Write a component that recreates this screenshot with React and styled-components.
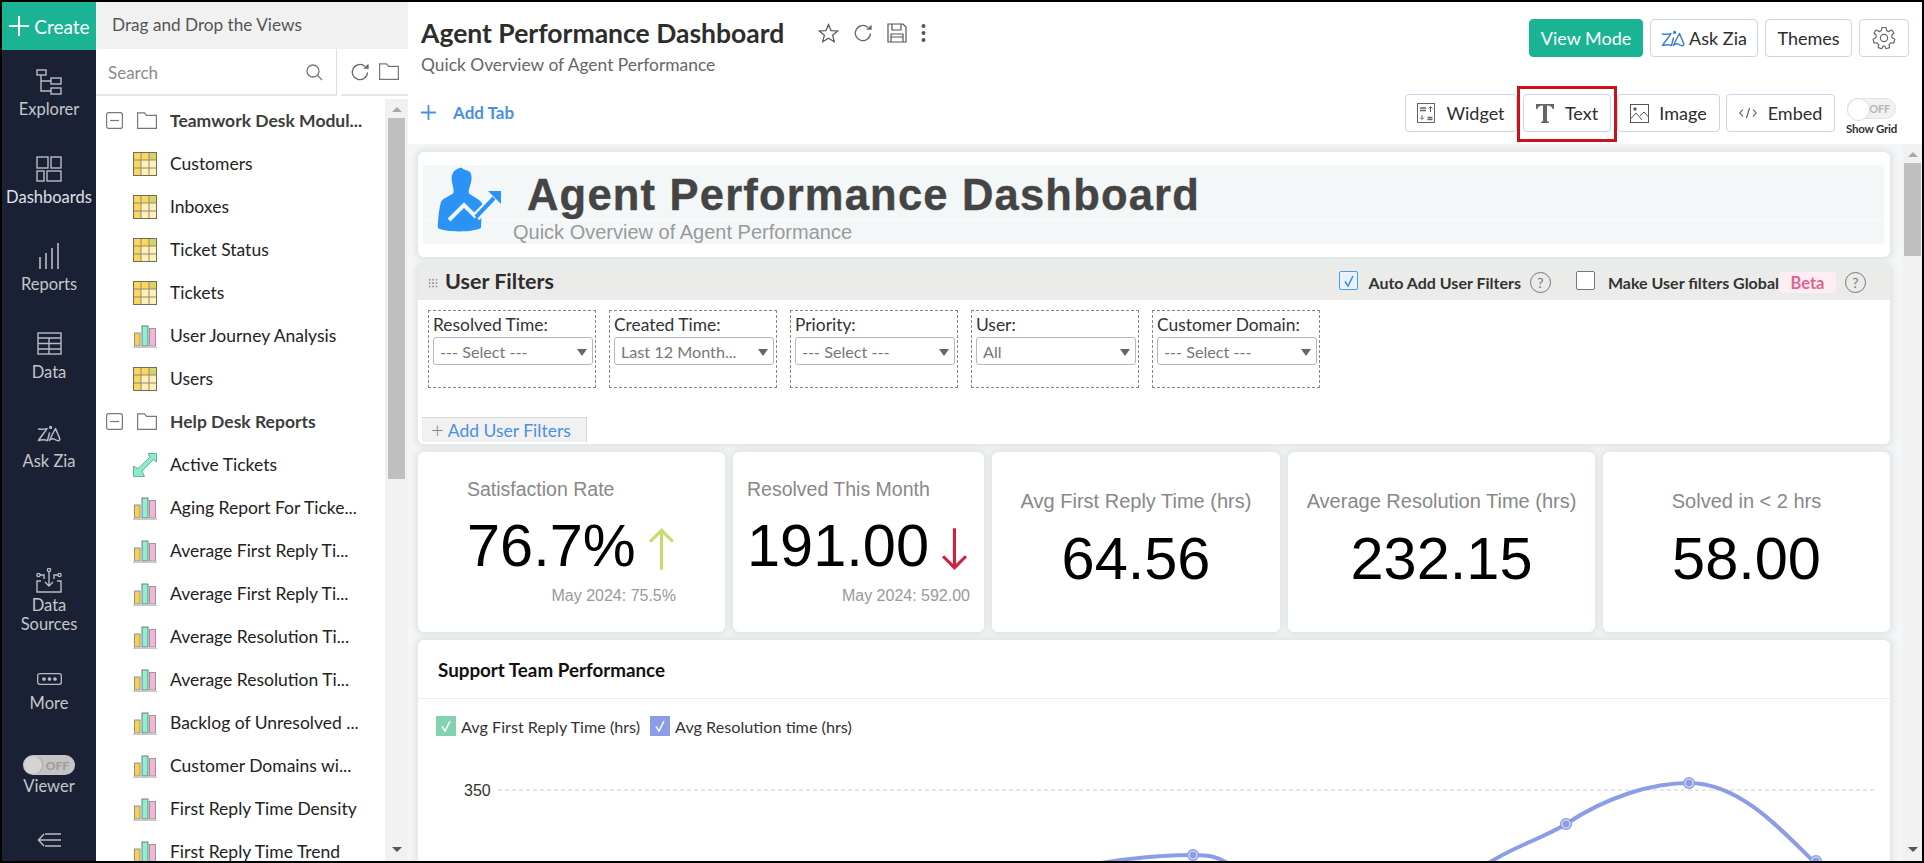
import React from "react";
import styled, { createGlobalStyle } from "styled-components";

const GlobalStyle = createGlobalStyle`
  html, body { margin: 0; padding: 0; height: 100%; overflow: hidden; background: #fff; }
  #root { height: 100%; }
  * { box-sizing: border-box; }
  body { font-family: "Lato", "Liberation Sans", sans-serif; }
`;

// ── Shell ────────────────────────────────────────────────────────────────────

const Frame = styled.div`
  display: flex;
  width: 1924px;
  height: 863px;
  border: 2px solid #000;
  overflow: hidden;
  background: #fff;
`;

// ── Left rail ────────────────────────────────────────────────────────────────

const Rail = styled.nav`
  width: 94px;
  flex-shrink: 0;
  display: flex;
  flex-direction: column;
  background: #1b2134;
`;

const CreateBtn = styled.div`
  height: 48px;
  background: #1ab394;
  color: #fff;
  display: flex;
  align-items: center;
  justify-content: center;
  gap: 4px;
  font-size: 19px;
`;

const RailItem = styled.div`
  height: ${({ $h }) => $h || 87.5}px;
  margin-top: ${({ $mt }) => $mt || 0}px;
  margin-bottom: ${({ $mb }) => $mb || 0}px;
  display: flex;
  flex-direction: column;
  align-items: center;
  justify-content: center;
  gap: ${({ $gap }) => $gap ?? 6}px;
  color: ${({ $active }) => ($active ? "#dfe0e4" : "#c4c6cc")};
  font-size: 16.5px;
  line-height: 19px;
  text-align: center;
  svg { display: block; }
`;

const RailBottom = styled.div`
  margin-top: auto;
`;

const RailToggle = styled.div`
  width: 52px;
  height: 20px;
  border-radius: 10px;
  background: #c4c4c4;
  display: flex;
  align-items: center;
  justify-content: flex-end;
  padding-right: 6px;
  position: relative;
  color: #9a9a9a;
  font-size: 12px;
  font-weight: 700;
  &::before {
    content: "";
    position: absolute;
    left: 1px;
    top: 1px;
    width: 18px;
    height: 18px;
    border-radius: 50%;
    background: #d4d4d4;
    box-shadow: 1px 0 1px #aaa;
  }
`;

// ── Views panel ──────────────────────────────────────────────────────────────

const Views = styled.aside`
  width: 312px;
  flex-shrink: 0;
  display: flex;
  flex-direction: column;
  background: #fff;
`;

const ViewsHead = styled.div`
  height: 47px;
  flex-shrink: 0;
  background: #f1f1f1;
  color: #555;
  font-size: 17.2px;
  display: flex;
  align-items: center;
  padding: 0 0 2px 16px;
`;

const SearchRow = styled.div`
  height: 47px;
  flex-shrink: 0;
  display: flex;
`;

const SearchBox = styled.div`
  width: 241px;
  border-right: 1px solid #dedede;
  border-bottom: 2px solid #e6e6e6;
  display: flex;
  align-items: center;
  justify-content: space-between;
  padding: 1px 13px 0 12px;
  color: #8b8b8b;
  font-size: 17px;
`;

const SearchTools = styled.div`
  margin-left: 4px;
  flex: 1;
  border-bottom: 2px solid #e6e6e6;
  display: flex;
  align-items: center;
  gap: 9px;
  padding-left: 9px;
`;

const TreeWrap = styled.div`
  flex: 1;
  min-height: 0;
  display: flex;
  padding-top: 3px;
  overflow: hidden;
`;

const Tree = styled.div`
  flex: 1;
  min-width: 0;
  overflow: hidden;
`;

const TreeRow = styled.div`
  height: 43px;
  display: flex;
  align-items: center;
  padding-left: ${({ $folder }) => ($folder ? 10 : 37)}px;
  gap: 13px;
  color: ${({ $folder }) => ($folder ? "#3d3d3d" : "#222")};
  font-size: 17.5px;
  font-weight: ${({ $folder }) => ($folder ? 700 : 400)};
  white-space: nowrap;
  svg { flex-shrink: 0; display: block; }
`;

const FolderIcons = styled.span`
  display: flex;
  align-items: center;
  gap: 14px;
`;

const VScroll = styled.div`
  width: ${({ $w }) => $w}px;
  flex-shrink: 0;
  background: #f1f1f1;
  display: flex;
  flex-direction: column;
  align-items: center;
  padding: 0 ${({ $pad }) => $pad || 0}px;
`;

const ScrollArrow = styled.div`
  flex-shrink: 0;
  width: 0;
  height: 0;
  border-left: 5px solid transparent;
  border-right: 5px solid transparent;
  ${({ $down }) =>
    $down
      ? "border-top: 5px solid #555; margin-top: auto; margin-bottom: 9px;"
      : "border-bottom: 5px solid #a8a8a8; margin-top: 8px; margin-bottom: 6px;"}
`;

const ScrollThumb = styled.div`
  width: 100%;
  height: ${({ $h }) => $h}px;
  background: #bfbfbf;
`;

// ── Main ─────────────────────────────────────────────────────────────────────

const Main = styled.main`
  flex: 1;
  min-width: 0;
  display: flex;
  flex-direction: column;
`;

const TopRow = styled.header`
  height: 76px;
  flex-shrink: 0;
  display: flex;
  justify-content: space-between;
  padding: 17px 13px 0 13px;
`;

const TitleLine = styled.div`
  display: flex;
  align-items: center;
  gap: 14px;
  height: 28px;
`;

const PageTitle = styled.h1`
  margin: 0 20px 0 0;
  font-size: 26.5px;
  font-weight: 700;
  color: #2d2d2d;
  white-space: nowrap;
`;

const PageSub = styled.div`
  margin-top: 7px;
  color: #666;
  font-size: 17.4px;
`;

const HeadBtns = styled.div`
  display: flex;
  gap: 7px;
  height: 38px;
`;

const Btn = styled.div`
  height: 38px;
  width: ${({ $w }) => $w}px;
  display: flex;
  align-items: center;
  justify-content: center;
  gap: ${({ $gap }) => $gap || 4}px;
  border-radius: 4px;
  border: 1px solid ${({ $primary }) => ($primary ? "#1ab394" : "#c9d5e8")};
  background: ${({ $primary }) => ($primary ? "#1ab394" : "#fff")};
  color: ${({ $primary }) => ($primary ? "#fff" : "#2d2d2d")};
  font-size: 18px;
  white-space: nowrap;
`;

const ToolRow = styled.div`
  height: 66px;
  flex-shrink: 0;
  display: flex;
  justify-content: space-between;
  align-items: flex-start;
  padding: 16px 25px 0 13px;
`;

const AddTab = styled.div`
  height: 36px;
  display: flex;
  align-items: center;
  gap: 17px;
  color: #4a90e2;
  font-size: 17px;
  font-weight: 700;
`;

const Tools = styled.div`
  display: flex;
  gap: 6px;
  align-items: flex-start;
`;

const Highlight = styled.div`
  position: relative;
  &::after {
    content: "";
    position: absolute;
    inset: -8px -6px -10px -6px;
    border: 3px solid #c8131b;
    pointer-events: none;
  }
`;

const GridSwitch = styled.div`
  width: 51px;
  margin-left: 5px;
  display: flex;
  flex-direction: column;
  align-items: center;
  gap: 3px;
  margin-top: 4px;
  color: #333;
  font-size: 11.5px;
  letter-spacing: -0.2px;
  font-weight: 700;
  white-space: nowrap;
`;

const GridToggle = styled.div`
  width: 49px;
  height: 21px;
  border-radius: 11px;
  background: #f1f1f1;
  border: 1px solid #e2e2e2;
  position: relative;
  display: flex;
  align-items: center;
  justify-content: flex-end;
  padding-right: 5px;
  color: #b5b5b5;
  font-size: 11px;
  &::before {
    content: "";
    position: absolute;
    left: -1px;
    top: -1px;
    width: 21px;
    height: 21px;
    border-radius: 50%;
    background: #fff;
    border: 1px solid #ddd;
  }
`;

// ── Canvas ───────────────────────────────────────────────────────────────────

const CanvasWrap = styled.div`
  flex: 1;
  min-height: 0;
  display: flex;
  background: #f3f5f6;
`;

const Canvas = styled.div`
  flex: 1;
  min-width: 0;
  overflow: hidden;
  padding: 8px 13px 0 10px;
  display: flex;
  flex-direction: column;
  gap: 8px;
`;

const Card = styled.section`
  background: #fff;
  border-radius: 6px;
  box-shadow: 0 0 5px 3px #e2e6e6;
  flex-shrink: 0;
`;

const BannerCard = styled(Card)`
  height: 105px;
  padding: 13px 6px 13px 5px;
`;

const Banner = styled.div`
  height: 79px;
  display: flex;
  background: linear-gradient(#f4f7f8 54px, #fafbfb 54px, #fafbfb 55px, #f4f7f8 55px);
`;

const BannerIcon = styled.div`
  width: 90px;
  flex-shrink: 0;
  padding: 2px 0 0 14px;
`;

const BannerText = styled.div`
  display: flex;
  flex-direction: column;
`;

const BannerTitle = styled.div`
  font-family: "Liberation Sans", Arial, sans-serif;
  font-weight: 700;
  font-size: 43.5px;
  line-height: 48px;
  letter-spacing: 1.2px;
  -webkit-text-stroke: 0.4px #444;
  color: #444;
  padding-left: 14px;
  white-space: nowrap;
  margin-top: 6px;
`;

const BannerSub = styled.div`
  font-family: "Liberation Sans", Arial, sans-serif;
  font-size: 20px;
  line-height: 24px;
  color: #9a9a9a;
  white-space: nowrap;
  margin-top: 1px;
`;

const FilterCard = styled(Card)`
  height: 179px;
  display: flex;
  flex-direction: column;
`;

const FilterHead = styled.div`
  height: 35px;
  flex-shrink: 0;
  background: #ebebe9;
  border-radius: 6px 6px 0 0;
  display: flex;
  align-items: center;
  padding: 0 24px 0 10px;
`;

const Grip = styled.span`
  width: 10px;
  height: 10px;
  margin-right: 7px;
  background-image: radial-gradient(#999 1px, transparent 1.1px);
  background-size: 3.4px 3.4px;
`;

const FilterTitle = styled.span`
  font-size: 21.5px;
  font-weight: 700;
  color: #2d2d2d;
  margin: -3px auto 0 0;
`;

const CheckLabel = styled.span`
  font-size: 16px;
  font-weight: 700;
  color: #333;
  white-space: nowrap;
`;

const CheckBox = styled.span`
  width: 19px;
  height: 19px;
  border-radius: 2px;
  margin-right: ${({ $mr }) => $mr || 10}px;
  margin-top: -4px;
  border: 1px solid ${({ $on }) => ($on ? "#4a9be8" : "#777")};
  background: ${({ $on }) => ($on ? "#e9f2fb" : "#fff")};
  display: flex;
  align-items: center;
  justify-content: center;
`;

const HelpDot = styled.span`
  width: 21px;
  height: 21px;
  border-radius: 50%;
  border: 1px solid #777;
  color: #777;
  font-size: 14px;
  display: flex;
  align-items: center;
  justify-content: center;
  margin: 0 ${({ $after }) => $after || 0}px 0 9px;
`;

const BetaPill = styled.span`
  height: 21px;
  width: 57px;
  border-radius: 4px;
  background: #fdeef3;
  color: #e0648f;
  font-size: 16.5px;
  font-weight: 700;
  display: flex;
  align-items: center;
  justify-content: center;
`;

const FilterRow = styled.div`
  display: flex;
  gap: 13px;
  padding: 10px 0 0 10px;
`;

const FilterBox = styled.div`
  width: 168px;
  height: 78px;
  border: 1px dashed #888;
  padding: 4px 3px 0 4px;
`;

const FilterLabel = styled.div`
  font-size: 17.4px;
  line-height: 20px;
  color: #333;
  white-space: nowrap;
`;

const SelectBox = styled.div`
  margin-top: 2px;
  height: 28px;
  width: 160px;
  border: 1px solid #b4b6c4;
  border-radius: 3px;
  display: flex;
  align-items: center;
  justify-content: space-between;
  padding: 0 5px 0 6px;
  color: #777;
  font-size: 16.2px;
  white-space: nowrap;
  &::after {
    content: "";
    border-left: 5px solid transparent;
    border-right: 5px solid transparent;
    border-top: 7px solid #666;
    margin-top: 2px;
  }
`;

const AddFilters = styled.div`
  margin: auto 0 2px 4px;
  width: 165px;
  height: 25px;
  background: #f1f1f1;
  border-top: 1px solid #d8d8d8;
  border-right: 1px solid #d8d8d8;
  color: #4a90e2;
  font-size: 17.5px;
  display: flex;
  align-items: center;
  gap: 4px;
  padding-left: 9px;
  white-space: nowrap;
  span { color: #888; font-size: 22px; line-height: 20px; font-weight: 300; }
`;

const KpiRow = styled.div`
  display: grid;
  grid-template-columns: 307px 251px 288px 307px 287px;
  gap: 8px;
  flex-shrink: 0;
`;

const Kpi = styled(Card)`
  height: 180px;
  display: flex;
  flex-direction: column;
  font-family: "Liberation Sans", Arial, sans-serif;
  align-items: ${({ $center }) => ($center ? "center" : "stretch")};
  padding: ${({ $center }) => ($center ? "37px 0 0" : "25px 0 0")};
  padding-left: ${({ $pad, $center }) => ($center ? 0 : $pad)}px;
  padding-right: ${({ $pad, $center }) => ($center ? 0 : $pad)}px;
`;

const KpiTitle = styled.div`
  color: #888;
  font-size: ${({ $size }) => $size || 20}px;
  line-height: 24px;
  white-space: nowrap;
`;

const KpiValue = styled.div`
  color: #000;
  font-size: 59.5px;
  line-height: 66px;
  margin-top: ${({ $center }) => ($center ? 13 : 12)}px;
  display: flex;
  align-items: center;
  gap: 12px;
  white-space: nowrap;
  svg { margin-top: 6px; }
`;

const KpiSub = styled.div`
  margin-top: 7px;
  text-align: right;
  color: #999;
  font-size: 16px;
  line-height: 20px;
  white-space: nowrap;
`;

const ChartCard = styled(Card)`
  flex: 1;
  min-height: 240px;
  border-radius: 6px 6px 0 0;
`;

const ChartHead = styled.div`
  height: 59px;
  border-bottom: 1px solid #eee;
  display: flex;
  align-items: center;
  padding-left: 20px;
  color: #111;
  font-size: 18.8px;
  font-weight: 700;
`;

const Legend = styled.div`
  display: flex;
  align-items: center;
  gap: 10px;
  padding: 17px 0 0 18px;
`;

const LegendItem = styled.span`
  display: flex;
  align-items: center;
  gap: 5px;
  color: #333;
  font-size: 16.2px;
  white-space: nowrap;
`;

const LegendBox = styled.span`
  width: 20px;
  height: 20px;
  background: ${({ $c }) => $c};
  display: flex;
  align-items: center;
  justify-content: center;
`;

const ChartSvg = styled.svg`
  display: block;
  position: absolute;
  left: 0;
  top: 0;
`;

const ChartBody = styled.div`
  position: relative;
`;

// ── Icons ────────────────────────────────────────────────────────────────────

const Line = ({ w, h, c = "#b9bcc4", sw = 1.4, children, fill = "none" }) => (
  <svg width={w} height={h} viewBox={`0 0 ${w} ${h}`} fill={fill} stroke={c} strokeWidth={sw}>
    {children}
  </svg>
);

const ZiaMark = ({ c = "#b9bcc4", w = 24, h = 19, sw = 1.5 }) => (
  <svg width={w} height={h} viewBox="0 0 24 19" fill="none" stroke={c} strokeWidth={sw} strokeLinejoin="round" strokeLinecap="round">
    <path d="M1.5 5 C4 5.6 7 5.4 10 4.6 C7.5 8.5 4 12.5 1.5 16.5 C4.5 15.4 7.5 15.4 10.5 16.5 L12.5 9" />
    <circle cx="13.6" cy="3.4" r="0.9" fill={c} />
    <path d="M12.5 16.5 C14.5 12 16.5 8 18.5 4.5 C20 8 21.5 11.5 22.8 15 C22.8 17.5 20 17 18 15.5 C16.5 14.5 15 14.6 13.8 15.4" />
  </svg>
);

const TableIcon = () => (
  <svg width="24" height="24" viewBox="0 0 24 24">
    <rect x="0.5" y="0.5" width="23" height="23" fill="#fff0b8" />
    <rect x="1" y="1" width="22" height="7" fill="#fbd75e" />
    <rect x="1" y="8" width="7" height="15" fill="#fbd75e" />
    <rect x="16" y="1" width="7" height="7" fill="#d6d464" />
    <path d="M8 0.5 V23.5 M16 0.5 V23.5 M0.5 8 H23.5 M0.5 16 H23.5" stroke="#8f8a78" strokeWidth="1" />
    <rect x="0.5" y="0.5" width="23" height="23" fill="none" stroke="#6f6c62" />
  </svg>
);

const ChartIcon = () => (
  <svg width="24" height="24" viewBox="0 0 24 24">
    <rect x="1.5" y="9" width="5.5" height="13" fill="#f8d24f" stroke="#8f8f8f" />
    <rect x="9" y="2" width="6" height="20" fill="#8ef0cf" stroke="#6f7f7a" />
    <rect x="16.5" y="4.5" width="6" height="17.5" fill="#f3b4d8" stroke="#999" />
    <path d="M0 23.3 H24" stroke="#c8c8c8" strokeWidth="1.5" />
  </svg>
);

const ArrowsIcon = () => (
  <svg width="24" height="24" viewBox="0 0 24 24">
    <path
      d="M15 0.5 H23.5 V9 L20.5 6.5 L9 18 L11.5 23.5 H0.5 V13 L5 15.5 L17 4Z"
      fill="#86eec8"
      stroke="#5a9a88"
      strokeWidth="0.8"
    />
  </svg>
);

const FolderIcon = ({ size = 20, c = "#777" }) => (
  <svg width={size} height={size * 0.85} viewBox="0 0 20 17" fill="#fff" stroke={c} strokeWidth="1.2">
    <path d="M0.6 16.4 V0.8 H7.5 L9.5 3.4 H19.4 V16.4Z" />
  </svg>
);

const MinusBox = () => (
  <svg width="17" height="17" viewBox="0 0 17 17" fill="none" stroke="#777" strokeWidth="1.2">
    <rect x="0.6" y="0.6" width="15.8" height="15.8" rx="2" />
    <path d="M4 8.5 H13" />
  </svg>
);

const RefreshIcon = ({ size = 20, c = "#666" }) => (
  <svg width={size} height={size} viewBox="0 0 20 20" fill="none" stroke={c} strokeWidth="1.3">
    <path d="M17.5 10.5 A7.6 7.6 0 1 1 15 4.4" />
    <path d="M13.2 6.8 L18.8 6.8 L18.4 1.8Z" fill={c} stroke="none" />
  </svg>
);

const UpArrow = ({ c, flip }) => (
  <svg width="27" height="42" viewBox="0 0 26 40" fill="none" stroke={c} strokeWidth="3" style={flip ? { transform: "rotate(180deg)" } : undefined}>
    <path d="M13 40 V2 M2 13 L13 2 L24 13" />
  </svg>
);

const Check = ({ c = "#fff", s = 14 }) => (
  <svg width={s} height={s} viewBox="0 0 14 14" fill="none" stroke={c} strokeWidth="1.5">
    <path d="M3 7.5 L6 12 L11 2" />
  </svg>
);

const AgentIcon = () => (
  <svg width="64" height="65" viewBox="0 0 64 65">
    <path
      d="M24 0.5 C20 2 17 3 16 6 C14 9 14.5 14 15.5 17 C16 21 17.5 24 16 26.5 C12 29.5 6 31 4 35 C2 42 1 52 0.8 61 C8 65.5 36 65.5 44 61 L45 36 C42 32 36 29.5 32 26.5 C31 24 32.5 21 33.5 17 C35 13 35 8 33 5 C30 3 27 3 24 0.5Z"
      fill="#2a93f5"
    />
    <path d="M39 50 L52 37" fill="none" stroke="#f4f7f8" strokeWidth="9" />
    <path d="M12 53 L27 38 L39 50" fill="none" stroke="#eef6fd" strokeWidth="4" />
    <path d="M39 50 L57 31" fill="none" stroke="#2a93f5" strokeWidth="4" />
    <path d="M51 24 H64 V37Z" fill="#2a93f5" />
  </svg>
);

// ── Data ─────────────────────────────────────────────────────────────────────

const teamwork = [
  ["Customers", TableIcon],
  ["Inboxes", TableIcon],
  ["Ticket Status", TableIcon],
  ["Tickets", TableIcon],
  ["User Journey Analysis", ChartIcon],
  ["Users", TableIcon],
];

const helpDesk = [
  ["Active Tickets", ArrowsIcon],
  ["Aging Report For Ticke...", ChartIcon],
  ["Average First Reply Ti...", ChartIcon],
  ["Average First Reply Ti...", ChartIcon],
  ["Average Resolution Ti...", ChartIcon],
  ["Average Resolution Ti...", ChartIcon],
  ["Backlog of Unresolved ...", ChartIcon],
  ["Customer Domains wi...", ChartIcon],
  ["First Reply Time Density", ChartIcon],
  ["First Reply Time Trend", ChartIcon],
];

const filters = [
  ["Resolved Time:", "--- Select ---"],
  ["Created Time:", "Last 12 Month..."],
  ["Priority:", "--- Select ---"],
  ["User:", "All"],
  ["Customer Domain:", "--- Select ---"],
];

const chartPoints = [
  [775, 119],
  [1148, 88],
  [1271, 47],
  [1398, 125],
];

const FolderRow = ({ name }) => (
  <TreeRow $folder>
    <FolderIcons>
      <MinusBox />
      <FolderIcon />
    </FolderIcons>
    {name}
  </TreeRow>
);

const App = () => (
  <>
    <GlobalStyle />
    <Frame>
      <Rail>
        <CreateBtn>
          <svg width="22" height="22" viewBox="0 0 22 22" stroke="#fff" strokeWidth="2">
            <path d="M11 1 V21 M1 11 H21" />
          </svg>
          Create
        </CreateBtn>
        <RailItem $gap={5}>
          <Line w={26} h={26}>
            <rect x="1" y="1" width="9" height="5" />
            <rect x="15" y="9" width="10" height="6" />
            <rect x="15" y="19" width="10" height="6" />
            <path d="M5 6 V22 H15 M5 12 H15" />
          </Line>
          Explorer
        </RailItem>
        <RailItem $active>
          <Line w={26} h={26}>
            <rect x="1" y="1" width="11" height="11" />
            <rect x="15" y="1" width="10" height="11" />
            <rect x="1" y="15" width="7" height="10" />
            <rect x="11" y="15" width="14" height="10" />
          </Line>
          Dashboards
        </RailItem>
        <RailItem>
          <Line w={22} h={26} sw={1.6}>
            <path d="M2 26 V14 M8 26 V10 M14 26 V5 M20 26 V0" />
          </Line>
          Reports
        </RailItem>
        <RailItem $gap={8} $mt={1}>
          <Line w={25} h={23}>
            <rect x="1" y="1" width="23" height="21" />
            <path d="M1 6 H24 M1 11.5 H24 M1 17 H24 M12 6 V22" />
          </Line>
          Data
        </RailItem>
        <RailItem $gap={9} $mt={3}>
          <ZiaMark />
          Ask Zia
        </RailItem>
        <RailBottom>
          <RailItem $gap={3} $mb={4}>
            <Line w={26} h={25}>
              <path d="M5 13 H1 V24 H25 V13 H21" />
              <path d="M13 3 V18 M9 14 L13 18 L17 14" />
              <circle cx="13" cy="2" r="1.6" />
              <circle cx="2.5" cy="7" r="1.6" />
              <circle cx="23.5" cy="7" r="1.6" />
              <path d="M4 7 H8 V11 M22 7 H18 V11" />
            </Line>
            <span>
              Data
              <br />
              Sources
            </span>
          </RailItem>
          <RailItem $gap={9}>
            <svg width="25" height="12" viewBox="0 0 25 12" fill="none" stroke="#b9bcc4" strokeWidth="1.3">
              <rect x="0.7" y="0.7" width="23.6" height="10.6" rx="2" />
              <circle cx="7" cy="6" r="1.2" fill="#b9bcc4" />
              <circle cx="12.5" cy="6" r="1.2" fill="#b9bcc4" />
              <circle cx="18" cy="6" r="1.2" fill="#b9bcc4" />
            </svg>
            More
          </RailItem>
          <RailItem $h={78} $gap={2} $mb={4.5}>
            <RailToggle>OFF</RailToggle>
            Viewer
          </RailItem>
          <RailItem $h={42}>
            <Line w={24} h={16} sw={1.5}>
              <path d="M7 2 L1.5 8 L7 14 M2 8 H24 M8 2 H24 M8 14 H24" />
            </Line>
          </RailItem>
        </RailBottom>
      </Rail>

      <Views>
        <ViewsHead>Drag and Drop the Views</ViewsHead>
        <SearchRow>
          <SearchBox>
            Search
            <svg width="17" height="17" viewBox="0 0 17 17" fill="none" stroke="#777" strokeWidth="1.3">
              <circle cx="7" cy="7" r="6" />
              <path d="M11.5 11.5 L16 16" />
            </svg>
          </SearchBox>
          <SearchTools>
            <RefreshIcon />
            <FolderIcon />
          </SearchTools>
        </SearchRow>
        <TreeWrap>
          <Tree>
            <FolderRow name="Teamwork Desk Modul..." />
            {teamwork.map(([name, Icon]) => (
              <TreeRow key={name}>
                <Icon />
                {name}
              </TreeRow>
            ))}
            <FolderRow name="Help Desk Reports" />
            {helpDesk.map(([name, Icon], i) => (
              <TreeRow key={i}>
                <Icon />
                {name}
              </TreeRow>
            ))}
          </Tree>
          <VScroll $w={23} $pad={3}>
            <ScrollArrow />
            <ScrollThumb $h={361} />
            <ScrollArrow $down />
          </VScroll>
        </TreeWrap>
      </Views>

      <Main>
        <TopRow>
          <div>
            <TitleLine>
              <PageTitle>Agent Performance Dashboard</PageTitle>
              <svg width="21" height="20" viewBox="0 0 21 20" fill="none" stroke="#555" strokeWidth="1.2">
                <path d="M10.5 1.5 L13 7.6 L19.8 8 L14.6 12.2 L16.3 18.7 L10.5 15.2 L4.7 18.7 L6.4 12.2 L1.2 8 L8 7.6Z" />
              </svg>
              <RefreshIcon />
              <svg width="20" height="20" viewBox="0 0 20 20" fill="none" stroke="#555" strokeWidth="1.2">
                <path d="M1 1 H16 L19 4 V19 H1Z" />
                <path d="M5 1 V7 H14 V1 M4 19 V11 H16 V19 M4 14 H16" />
              </svg>
              <svg width="5" height="20" viewBox="0 0 5 20" fill="#555">
                <circle cx="2.5" cy="3" r="2" />
                <circle cx="2.5" cy="10" r="2" />
                <circle cx="2.5" cy="17" r="2" />
              </svg>
            </TitleLine>
            <PageSub>Quick Overview of Agent Performance</PageSub>
          </div>
          <HeadBtns>
            <Btn $primary $w={114}>View Mode</Btn>
            <Btn $w={108}>
              <ZiaMark c="#3f7fd6" />
              Ask Zia
            </Btn>
            <Btn $w={87}>Themes</Btn>
            <Btn $w={50}>
              <svg width="24" height="26" viewBox="0 0 24 24" fill="none" stroke="#666" strokeWidth="1.2" strokeLinejoin="round">
                <circle cx="12" cy="12" r="3.6" />
                <path d="M10 1.5 H14 L14.6 4.6 L16.8 5.6 L19.6 3.9 L22 7 L19.7 9.2 L20 11.8 L22.8 13.2 L21.8 17 L18.8 16.8 L17 18.6 L17.6 21.6 L14 22.8 L12.8 20.2 H10.9 L9.6 22.8 L6.2 21.6 L6.8 18.6 L5 16.8 L2 17 L1.1 13.2 L3.9 11.8 L4.2 9.2 L2 7 L4.2 3.9 L7.1 5.6 L9.3 4.6Z" />
              </svg>
            </Btn>
          </HeadBtns>
        </TopRow>

        <ToolRow>
          <AddTab>
            <svg width="15" height="15" viewBox="0 0 15 15" stroke="#4a90e2" strokeWidth="1.8">
              <path d="M7.5 0 V15 M0 7.5 H15" />
            </svg>
            Add Tab
          </AddTab>
          <Tools>
            <Btn $w={112} $gap={11}>
              <svg width="18" height="20" viewBox="0 0 18 20" fill="none" stroke="#666" strokeWidth="1">
                <rect x="0.5" y="0.5" width="17" height="19" />
                <path d="M3 5 H9 M3 7.5 H9" strokeWidth="1.4" />
                <path d="M13.5 9 V4 M11.5 5.5 L13.5 3.5 L15.5 5.5 M5 12 V16 M3 14.5 L5 16.5 L7 14.5" />
                <path d="M10.5 14.5 H15.5 M10.5 16.5 H15.5" strokeWidth="1.6" />
              </svg>
              Widget
            </Btn>
            <Highlight>
              <Btn $w={88} $gap={11}>
                <svg width="18" height="19" viewBox="0 0 18 19" fill="#666">
                  <path d="M0 0 H18 V5 H16.6 Q16 1.5 11 1.5 V17 L13 18 V19 H5 V18 L7 17 V1.5 Q2 1.5 1.4 5 H0Z" />
                </svg>
                Text
              </Btn>
            </Highlight>
            <Btn $w={103} $gap={10}>
              <svg width="19" height="19" viewBox="0 0 19 19" fill="none" stroke="#555" strokeWidth="1">
                <rect x="0.5" y="0.5" width="18" height="18" />
                <circle cx="5" cy="5" r="1.2" fill="#555" />
                <path d="M0.5 15 L6 9 L12 16 M10 12 L14 8 L18.5 13" />
              </svg>
              Image
            </Btn>
            <Btn $w={109} $gap={11}>
              <svg width="18" height="12" viewBox="0 0 18 12" fill="none" stroke="#555" strokeWidth="1.1">
                <path d="M4 2.5 L0.8 6 L4 9.5 M14 2.5 L17.2 6 L14 9.5 M10.5 1 L7.5 11" />
              </svg>
              Embed
            </Btn>
            <GridSwitch>
              <GridToggle>OFF</GridToggle>
              Show Grid
            </GridSwitch>
          </Tools>
        </ToolRow>

        <CanvasWrap>
          <Canvas>
            <BannerCard>
              <Banner>
                <BannerIcon>
                  <AgentIcon />
                </BannerIcon>
                <BannerText>
                  <BannerTitle>Agent Performance Dashboard</BannerTitle>
                  <BannerSub>Quick Overview of Agent Performance</BannerSub>
                </BannerText>
              </Banner>
            </BannerCard>

            <FilterCard>
              <FilterHead>
                <Grip />
                <FilterTitle>User Filters</FilterTitle>
                <CheckBox $on>
                  <Check c="#3a8ee0" />
                </CheckBox>
                <CheckLabel>Auto Add User Filters</CheckLabel>
                <HelpDot $after={25}>?</HelpDot>
                <CheckBox $mr={13} />
                <CheckLabel>Make User filters Global</CheckLabel>
                <BetaPill>Beta</BetaPill>
                <HelpDot>?</HelpDot>
              </FilterHead>
              <FilterRow>
                {filters.map(([label, value]) => (
                  <FilterBox key={label}>
                    <FilterLabel>{label}</FilterLabel>
                    <SelectBox>{value}</SelectBox>
                  </FilterBox>
                ))}
              </FilterRow>
              <AddFilters>
                <span>+</span>Add User Filters
              </AddFilters>
            </FilterCard>

            <KpiRow>
              <Kpi $pad={49}>
                <KpiTitle $size={19.5}>Satisfaction Rate</KpiTitle>
                <KpiValue>
                  76.7%
                  <UpArrow c="#c9dc6a" />
                </KpiValue>
                <KpiSub>May 2024: 75.5%</KpiSub>
              </Kpi>
              <Kpi $pad={14}>
                <KpiTitle $size={19.5}>Resolved This Month</KpiTitle>
                <KpiValue>
                  191.00
                  <UpArrow c="#d0213f" flip />
                </KpiValue>
                <KpiSub>May 2024: 592.00</KpiSub>
              </Kpi>
              <Kpi $center>
                <KpiTitle>Avg First Reply Time (hrs)</KpiTitle>
                <KpiValue $center>64.56</KpiValue>
              </Kpi>
              <Kpi $center>
                <KpiTitle>Average Resolution Time (hrs)</KpiTitle>
                <KpiValue $center>232.15</KpiValue>
              </Kpi>
              <Kpi $center>
                <KpiTitle>Solved in &lt; 2 hrs</KpiTitle>
                <KpiValue $center>58.00</KpiValue>
              </Kpi>
            </KpiRow>

            <ChartCard>
              <ChartHead>Support Team Performance</ChartHead>
              <Legend>
                <LegendItem>
                  <LegendBox $c="#84d3b0">
                    <Check />
                  </LegendBox>
                  Avg First Reply Time (hrs)
                </LegendItem>
                <LegendItem>
                  <LegendBox $c="#8a9de6">
                    <Check />
                  </LegendBox>
                  Avg Resolution time (hrs)
                </LegendItem>
              </Legend>
              <ChartBody>
                <ChartSvg width="1472" height="130">
                  <text x="46" y="60" fontFamily="Liberation Sans, Arial, sans-serif" fontSize="16" fill="#333">350</text>
                  <path d="M80 54 H1458" stroke="#ccc" strokeDasharray="4 3" />
                  <path
                    d="M683 127 C720 121 750 119 775 119 C790 119 800 120 814 130 M1066 130 C1095 110 1122 104 1148 88 C1190 60 1235 47 1271 47 C1320 47 1360 90 1400 130"
                    fill="none"
                    stroke="#8a9de6"
                    strokeWidth="4"
                  />
                  {chartPoints.map(([x, y]) => (
                    <circle key={x} cx={x} cy={y} r="6" fill="#8a9de6" stroke="#fff" strokeWidth="0" />
                  ))}
                  {chartPoints.map(([x, y]) => (
                    <circle key={x} cx={x} cy={y} r="4" fill="#8a9de6" stroke="#dfe4fa" strokeWidth="1.2" />
                  ))}
                </ChartSvg>
              </ChartBody>
            </ChartCard>
          </Canvas>
          <VScroll $w={19} $pad={1}>
            <ScrollArrow />
            <ScrollThumb $h={93} />
            <ScrollArrow $down />
          </VScroll>
        </CanvasWrap>
      </Main>
    </Frame>
  </>
);

export default App;
